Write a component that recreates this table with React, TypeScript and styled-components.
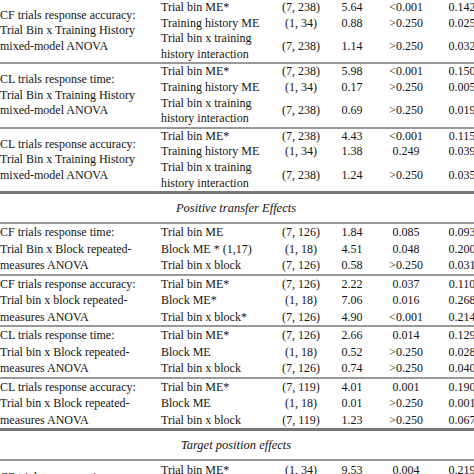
import React from "react";
import styled, { createGlobalStyle } from "styled-components";

const GlobalStyle = createGlobalStyle`
  html, body {
    margin: 0;
    padding: 0;
    background: #fff;
    overflow: hidden;
  }
  body {
    font-family: "Liberation Serif", "Times New Roman", serif;
    color: #141414;
  }
`

type Rule = 'none' | 'thin' | 'thick'

const ruleCss = (r?: Rule) =>
  r === 'thick' ? '3px solid #787878' : r === 'thin' ? '2px solid #999' : 'none'

const Page = styled.div`
  width: 474px;
  height: 474px;
  overflow: hidden;
`

const Table = styled.table`
  border-collapse: collapse;
  table-layout: fixed;
  width: 494px;
  margin-left: -2px;
  font-size: 12px;
`

const Row = styled.tr<{ $lh: number }>`
  line-height: ${p => p.$lh}px;
`

const Cell = styled.td<{ $top?: Rule; $padTop?: number }>`
  padding: ${p => p.$padTop ?? 0}px 0 0 0;
  vertical-align: middle;
  text-align: center;
  white-space: nowrap;
  border-top: ${p => ruleCss(p.$top)};
`

const LabelCell = styled(Cell)`
  text-align: left;
  padding-left: 2px;
`

const EffectCell = styled(Cell)`
  text-align: left;
  padding-left: 3px;
`

const Line = styled.span`
  display: block;
`

const HeaderCell = styled.td<{ $h: number }>`
  height: ${p => p.$h}px;
  padding: 0 18px 0 0;
  text-align: center;
  vertical-align: middle;
  font-style: italic;
  font-size: 12.5px;
  border-top: ${ruleCss('thick')};
  border-bottom: ${ruleCss('thin')};
`

interface Stat {
  effect: string[]
  df: string
  f: string
  p: string
  eta: string
}

interface GroupProps {
  label: string[]
  rows: Stat[]
  top: Rule
  lh: number
  padTop?: number
}

const Group: React.FC<GroupProps> = ({ label, rows, top, lh, padTop }) => (
  <>
    {rows.map((r, i) => {
      const t = i === 0 ? top : 'none'
      const pt = i === 0 ? padTop : 0
      return (
        <Row key={i} $lh={lh}>
          {i === 0 && (
            <LabelCell rowSpan={rows.length} $top={top}>
              {label.map(l => <Line key={l}>{l}</Line>)}
            </LabelCell>
          )}
          <EffectCell $top={t} $padTop={pt}>
            {r.effect.map(l => <Line key={l}>{l}</Line>)}
          </EffectCell>
          <Cell $top={t} $padTop={pt}>{r.df}</Cell>
          <Cell $top={t} $padTop={pt}>{r.f}</Cell>
          <Cell $top={t} $padTop={pt}>{r.p}</Cell>
          <Cell $top={t} $padTop={pt}>{r.eta}</Cell>
        </Row>
      )
    })}
  </>
)

const s = (effect: string | string[], df: string, f: string, p: string, eta: string): Stat => ({
  effect: Array.isArray(effect) ? effect : [effect], df, f, p, eta
})

const mixed = (title: string) => [title, 'Trial Bin x Training History', 'mixed-model ANOVA']
const interaction = ['Trial bin x training', 'history interaction']

const App: React.FC = () => (
  <Page>
    <GlobalStyle />
    <Table>
      <colgroup>
        <col style={{ width: 160 }} />
        <col style={{ width: 120 }} />
        <col style={{ width: 46 }} />
        <col style={{ width: 56 }} />
        <col style={{ width: 52 }} />
        <col style={{ width: 60 }} />
      </colgroup>
      <tbody>
        <Group
          label={mixed('CF trials response accuracy:')}
          top="none"
          lh={15.6}
          rows={[
            s('Trial bin ME*', '(7, 238)', '5.64', '<0.001', '0.142'),
            s('Training history ME', '(1, 34)', '0.88', '>0.250', '0.025'),
            s(interaction, '(7, 238)', '1.14', '>0.250', '0.032'),
          ]}
        />
        <Group
          label={mixed('CL trials response time:')}
          top="thin"
          lh={15.6}
          rows={[
            s('Trial bin ME*', '(7, 238)', '5.98', '<0.001', '0.150'),
            s('Training history ME', '(1, 34)', '0.17', '>0.250', '0.005'),
            s(interaction, '(7, 238)', '0.69', '>0.250', '0.019'),
          ]}
        />
        <Group
          label={mixed('CL trials response accuracy:')}
          top="thin"
          lh={15.6}
          rows={[
            s('Trial bin ME*', '(7, 238)', '4.43', '<0.001', '0.115'),
            s('Training history ME', '(1, 34)', '1.38', '0.249', '0.039'),
            s(interaction, '(7, 238)', '1.24', '>0.250', '0.035'),
          ]}
        />
        <tr>
          <HeaderCell colSpan={6} $h={28}>Positive transfer Effects</HeaderCell>
        </tr>
        <Group
          label={['CF trials response time:', 'Trial Bin x Block repeated-', 'measures ANOVA']}
          top="thin"
          lh={16.5}
          rows={[
            s('Trial bin ME', '(7, 126)', '1.84', '0.085', '0.093'),
            s('Block ME * (1,17)', '(1, 18)', '4.51', '0.048', '0.200'),
            s('Trial bin x block', '(7, 126)', '0.58', '>0.250', '0.031'),
          ]}
        />
        <Group
          label={['CF trials response accuracy:', 'Trial bin x block repeated-', 'measures ANOVA']}
          top="thin"
          lh={16.5}
          rows={[
            s('Trial bin ME*', '(7, 126)', '2.22', '0.037', '0.110'),
            s('Block ME*', '(1, 18)', '7.06', '0.016', '0.268'),
            s('Trial bin x block*', '(7, 126)', '4.90', '<0.001', '0.214'),
          ]}
        />
        <Group
          label={['CL trials response time:', 'Trial bin x Block repeated-', 'measures ANOVA']}
          top="thin"
          lh={16.5}
          rows={[
            s('Trial bin ME*', '(7, 126)', '2.66', '0.014', '0.129'),
            s('Block ME', '(1, 18)', '0.52', '>0.250', '0.028'),
            s('Trial bin x block', '(7, 126)', '0.74', '>0.250', '0.040'),
          ]}
        />
        <Group
          label={['CL trials response accuracy:', 'Trial bin x Block repeated-', 'measures ANOVA']}
          top="thin"
          lh={16.5}
          rows={[
            s('Trial bin ME*', '(7, 119)', '4.01', '0.001', '0.190'),
            s('Block ME', '(1, 18)', '0.01', '>0.250', '0.001'),
            s('Trial bin x block', '(7, 119)', '1.23', '>0.250', '0.067'),
          ]}
        />
        <tr>
          <HeaderCell colSpan={6} $h={28}>Target position effects</HeaderCell>
        </tr>
        <Group
          label={mixed('CF trials response time:')}
          top="thin"
          lh={15.6}
          padTop={2}
          rows={[
            s('Trial bin ME*', '(1, 34)', '9.53', '0.004', '0.219'),
            s('Training history ME', '(1, 34)', '0.02', '>0.250', '0.001'),
            s(interaction, '(1, 34)', '0.41', '>0.250', '0.012'),
          ]}
        />
      </tbody>
    </Table>
  </Page>
)

export default App
